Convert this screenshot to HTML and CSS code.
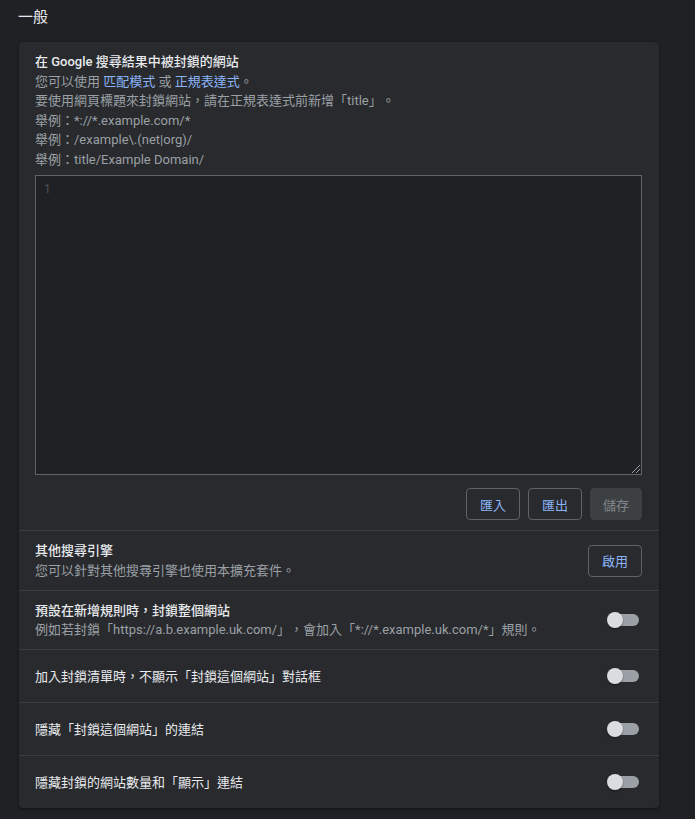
FILE: index.html
```html
<!DOCTYPE html>
<html lang="zh-Hant">
<head>
    <meta charset="UTF-8">
    <meta name="viewport" content="width=device-width, initial-scale=1.0">
    <title>選項</title>
    <link rel="stylesheet" href="styles.css">
</head>
<body>
    <div class="page">
        <h1 class="section-title">一般</h1>

        <div class="card">
            <div class="block">
                <div class="label">在 Google 搜尋結果中被封鎖的網站</div>
                <div class="sub">您可以使用 <a href="#">匹配模式</a> 或 <a href="#">正規表達式</a>。</div>
                <div class="sub">要使用網頁標題來封鎖網站，請在正規表達式前新增「title」。</div>
                <div class="sub">舉例：*://*.example.com/*</div>
                <div class="sub">舉例：/example\.(net|org)/</div>
                <div class="sub">舉例：title/Example Domain/</div>

                <div class="editor">
                    <div class="gutter">1</div>
                    <div class="grip"></div>
                </div>

                <div class="actions">
                    <button class="btn">匯入</button>
                    <button class="btn">匯出</button>
                    <button class="btn btn-disabled" disabled>儲存</button>
                </div>
            </div>

            <div class="row">
                <div class="row-text">
                    <div class="label">其他搜尋引擎</div>
                    <div class="sub">您可以針對其他搜尋引擎也使用本擴充套件。</div>
                </div>
                <button class="btn">啟用</button>
            </div>

            <div class="row">
                <div class="row-text">
                    <div class="label">預設在新增規則時，封鎖整個網站</div>
                    <div class="sub">例如若封鎖「https://a.b.example.uk.com/」，會加入「*://*.example.uk.com/*」規則。</div>
                </div>
                <div class="toggle"><span class="knob"></span></div>
            </div>

            <div class="row">
                <div class="row-text">
                    <div class="label">加入封鎖清單時，不顯示「封鎖這個網站」對話框</div>
                </div>
                <div class="toggle"><span class="knob"></span></div>
            </div>

            <div class="row">
                <div class="row-text">
                    <div class="label">隱藏「封鎖這個網站」的連結</div>
                </div>
                <div class="toggle"><span class="knob"></span></div>
            </div>

            <div class="row">
                <div class="row-text">
                    <div class="label">隱藏封鎖的網站數量和「顯示」連結</div>
                </div>
                <div class="toggle"><span class="knob"></span></div>
            </div>
        </div>
    </div>
</body>
</html>
```

FILE: styles.css
```css
body {
    margin: 0;
    background: #202124;
    color: #e8eaed;
    font-family: Roboto, "Noto Sans CJK TC", sans-serif;
    font-size: 13px;
    text-spacing-trim: space-all;
}

.page {
    width: 640px;
    padding: 0 0 12px 19px;
}

.section-title {
    margin: 0 0 0 -1px;
    padding: 6px 0 0 0;
    height: 42px;
    box-sizing: border-box;
    font-size: 15px;
    font-weight: 400;
    line-height: 22px;
    color: #e8eaed;
}

.card {
    background: #292a2d;
    border-radius: 4px;
    box-shadow: 0 1px 3px rgba(0,0,0,0.5);
}

.block {
    padding: 10px 17px 10px 16px;
}

.label {
    line-height: 19.5px;
    font-weight: 500;
    color: #e8eaed;
}

.sub {
    line-height: 19.5px;
    color: #9aa0a6;
}

.sub a {
    color: #8ab4f8;
    text-decoration: none;
}

.editor {
    position: relative;
    margin-top: 6px;
    height: 300px;
    box-sizing: border-box;
    border: 1px solid #5f6368;
    background: #202124;
}

.gutter {
    padding: 4px 0 0 8px;
    line-height: 18px;
    color: #4d5054;
    font-size: 12px;
}

.grip {
    position: absolute;
    right: 1px;
    bottom: 1px;
    width: 8px;
    height: 8px;
    background: linear-gradient(135deg, transparent 45%, #9aa0a6 45%, #9aa0a6 52%, transparent 52%, transparent 70%, #9aa0a6 70%, #9aa0a6 77%, transparent 77%);
}

.actions {
    display: flex;
    justify-content: flex-end;
    gap: 8px;
    margin-top: 13px;
}

.btn {
    height: 32px;
    padding: 0 13px;
    background: transparent;
    border: 1px solid #5f6368;
    border-radius: 4px;
    color: #8ab4f8;
    font-family: inherit;
    font-size: 13px;
    font-weight: 400;
    flex-shrink: 0;
}

.btn-disabled {
    padding: 0 12px;
    border-color: #3c4043;
    background: #3c4043;
    color: #80868b;
}

.row {
    display: flex;
    align-items: center;
    min-height: 53px;
    box-sizing: border-box;
    padding: 10px 17px 9.5px 16px;
    border-top: 1px solid #3c3d40;
}

.row-text {
    flex: 1;
    min-width: 0;
}

.row .label {
    font-weight: 400;
}

.row:nth-child(2) .label,
.row:nth-child(3) .label {
    font-weight: 500;
}

.toggle {
    position: relative;
    width: 32px;
    height: 16px;
    margin-right: 3px;
    flex-shrink: 0;
}

.toggle::before {
    content: '';
    position: absolute;
    left: 3px;
    top: 2px;
    width: 29px;
    height: 12px;
    border-radius: 6px;
    background: #9aa0a6;
}

.knob {
    position: absolute;
    left: 0;
    top: 0;
    width: 16px;
    height: 16px;
    border-radius: 50%;
    background: #dadce0;
    box-shadow: 0 1px 2px rgba(0,0,0,0.4);
}
```
